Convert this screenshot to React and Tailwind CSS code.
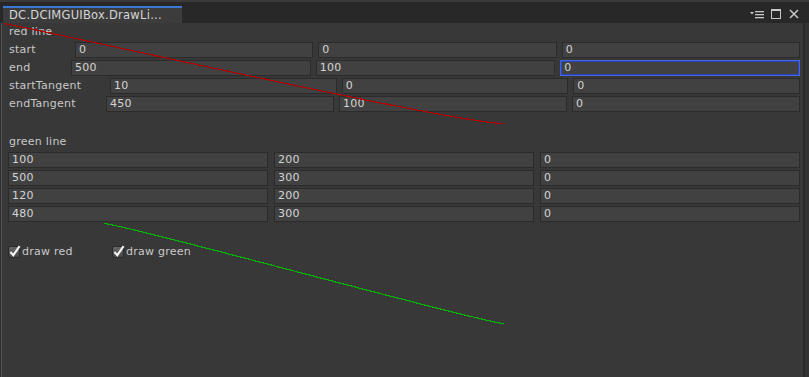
import React from 'react';

const redRows = [
    { label: 'start', labelClass: 'w-[67px]', values: ['0', '0', '0'] },
    { label: 'end', labelClass: 'w-[63px]', values: ['500', '100', '0'], focus: 2 },
    { label: 'startTangent', labelClass: 'w-[102px]', values: ['10', '0', '0'] },
    { label: 'endTangent', labelClass: 'w-[98px]', values: ['450', '100', '0'] },
];

const greenRows = [
    ['100', '200', '0'],
    ['500', '300', '0'],
    ['120', '200', '0'],
    ['480', '300', '0'],
];

const Field = ({ value, focus }) => (
    <div
        className={focus
            ? 'flex-1 min-w-0 h-4 bg-[#414141] border border-[#4565e0] shadow-[inset_0_0_0_1px_#2c45b0] pl-[3px] text-[11px] leading-[14px] text-[#d4d4d4]'
            : 'flex-1 min-w-0 h-4 bg-[#414141] border border-[#2b2b2b] pl-[3px] text-[11px] leading-[14px] text-[#d4d4d4]'}>
        {value}
    </div>
);

const Toggle = ({ label, className }) => (
    <div className={`flex items-center h-4 ${className}`}>
        <div className="relative w-3 h-3 rounded-[2px] border border-[#2a2a2a] bg-gradient-to-b from-[#666666] to-[#474747]">
            <svg className="absolute -top-[3px] -left-[1px]" width="14" height="14" viewBox="0 0 14 14">
                <path d="M2.4 8 L5.3 11.2 L11.6 2.2" fill="none" stroke="#f4f4f4" strokeWidth="2.1" />
            </svg>
        </div>
        <span className="ml-[2px] text-[11px] text-[#cacaca]">{label}</span>
    </div>
);

export default function App() {
    return (
        <div className="relative w-[809px] h-[377px] overflow-hidden bg-[#383838] tracking-[0.25px]" style={{ fontFamily: '"DejaVu Sans", "Liberation Sans", sans-serif' }}>
            {/* header with tab */}
            <div className="h-[23px] bg-[#282828] border-t-2 border-[#3a3a3a] flex items-end">
                <div className="ml-[3px] w-[179px] h-[17px] border-t-2 border-[#3b78d4] bg-[#3c3c3c] pl-[6px] text-[11.5px] leading-[15px] text-[#d6d6d6]">
                    DC.DCIMGUIBox.DrawLi...
                </div>
                <div className="flex-1" />
                <div className="self-start mt-[6px] mr-[10px] flex items-start gap-[6px]">
                    <svg width="15" height="10" viewBox="0 0 15 10" className="mt-[2px]">
                        <path d="M0 2 L4 2 L2 4.5 Z" fill="#c8c8c8" />
                        <rect x="5" y="1" width="9" height="1.3" fill="#c8c8c8" />
                        <rect x="5" y="4" width="9" height="1.3" fill="#c8c8c8" />
                        <rect x="5" y="7" width="9" height="1.3" fill="#c8c8c8" />
                    </svg>
                    <svg width="10" height="10" viewBox="0 0 10 10" className="mt-[1px]">
                        <rect x="0.5" y="0.5" width="9" height="9" fill="none" stroke="#c8c8c8" />
                        <rect x="0" y="0" width="10" height="2" fill="#c8c8c8" />
                    </svg>
                    <svg width="10" height="10" viewBox="0 0 10 10" className="mt-[1px] ml-[2px]">
                        <path d="M1 1 L9 9 M9 1 L1 9" stroke="#c8c8c8" strokeWidth="1.5" />
                    </svg>
                </div>
            </div>

            {/* body */}
            <div className="flex h-[354px]">
                <div className="w-[2px] bg-[#55514d] border-l border-[#2e2e2e]" />
                <div className="flex-1 pl-[6px] pr-[3px] pt-[1px] flex flex-col gap-[2px] text-[11px] text-[#c8c8c8]">
                    <div className="h-4 leading-4 pl-[1px]">red line</div>
                    {redRows.map(row => (
                        <div key={row.label} className="flex h-4 items-center">
                            <div className={`${row.labelClass} pl-[1px] leading-4`}>{row.label}</div>
                            <div className="flex-1 flex gap-[5px]">
                                {row.values.map((v, i) => <Field key={i} value={v} focus={row.focus === i} />)}
                            </div>
                        </div>
                    ))}
                    <div className="h-4 leading-4 pl-[1px] mt-[20px]">green line</div>
                    {greenRows.map((row, r) => (
                        <div key={r} className="flex h-4 gap-[6px]">
                            {row.map((v, i) => <Field key={i} value={v} />)}
                        </div>
                    ))}
                    <div className="flex mt-[20px]">
                        <Toggle label="draw red" className="w-[104px]" />
                        <Toggle label="draw green" />
                    </div>
                </div>
                <div className="w-[6px] bg-[#333333] border-l-2 border-[#2b2b2b]" />
            </div>

            {/* bezier curves drawn over the window */}
            <svg className="absolute left-0 top-0 pointer-events-none" width="809" height="377" shapeRendering="crispEdges">
                <g transform="translate(3.5 23.5)">
                    <path d="M0 0 C10 0 450 100 500 100" fill="none" stroke="#b00000" strokeWidth="1.2" />
                    <path d="M100 200 C120 200 480 300 500 300" fill="none" stroke="#00b400" strokeWidth="1.2" />
                </g>
            </svg>
        </div>
    );
}
